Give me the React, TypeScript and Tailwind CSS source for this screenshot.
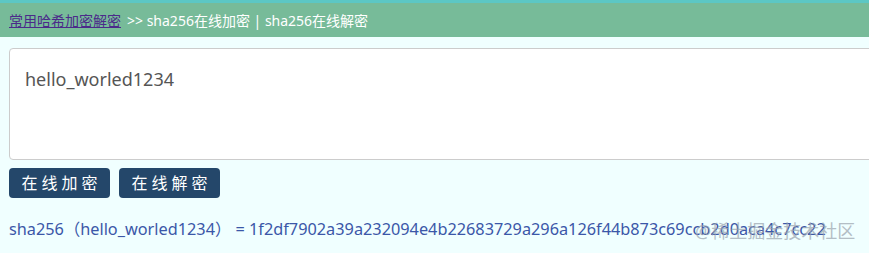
import React from 'react';

const font = { fontFamily: '"Noto Sans", "Noto Sans CJK SC", sans-serif' };

const App: React.FC = () => {
  const input = 'hello_worled1234';
  const hash = '1f2df7902a39a232094e4b22683729a296a126f44b873c69ccb2d0aca4c7cc22';

  return (
    <div className="w-[869px] h-[253px] overflow-hidden bg-[#f0ffff] relative font-['Noto_Sans','Noto_Sans_CJK_SC',sans-serif]">
      {/* Breadcrumb */}
      <div className="border-t-[3px] border-[#5cc7c4] bg-[#77bb99] h-[37px] flex items-center px-[9px] text-[14px] text-white">
        <a href="#" className="text-[#4b2a8a] underline">常用哈希加密解密</a>
        <span className="ml-[6px]">&gt;&gt; sha256在线加密 | sha256在线解密</span>
      </div>

      {/* Input */}
      <div className="pl-[9px] pt-[11px]">
        <textarea
          defaultValue={input}
          className="block w-[900px] h-[112px] bg-white border border-[#cccccc] rounded-[4px] px-[15px] py-[17px] text-[18px] text-[#555555] resize-none outline-none"
          style={font}
        />
      </div>

      {/* Actions */}
      <div className="flex gap-[9px] pl-[9px] pt-[8px]">
        <button className="w-[101px] h-[30px] bg-[#24476a] rounded-[4px] text-white text-[16px] tracking-[4px] pl-[4px]">在线加密</button>
        <button className="w-[101px] h-[30px] bg-[#24476a] rounded-[4px] text-white text-[16px] tracking-[4px] pl-[4px]">在线解密</button>
      </div>

      {/* Result */}
      <div className="pl-[9px] pt-[19px] text-[16.3px] text-[#3b57a8] whitespace-nowrap">
        sha256（{input}） = {hash}
      </div>

      {/* Watermark */}
      <div className="absolute left-[695px] top-[218px] text-[18px] text-[#9aa3ad] opacity-70 whitespace-nowrap">
        @稀土掘金技术社区
      </div>
    </div>
  );
};

export default App;
